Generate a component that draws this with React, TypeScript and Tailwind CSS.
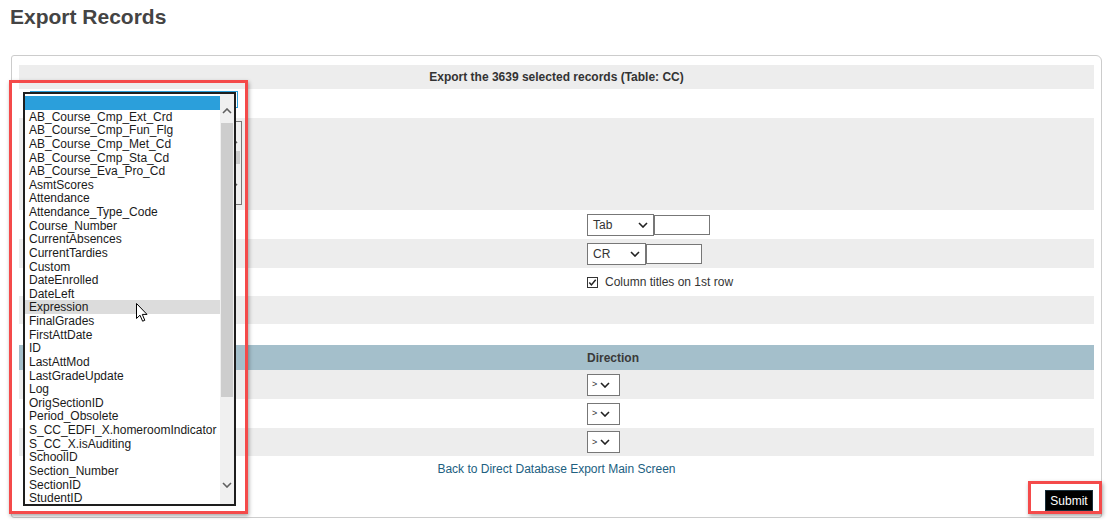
import type { ReactNode } from "react";

const fields = [
  "",
  "AB_Course_Cmp_Ext_Crd",
  "AB_Course_Cmp_Fun_Flg",
  "AB_Course_Cmp_Met_Cd",
  "AB_Course_Cmp_Sta_Cd",
  "AB_Course_Eva_Pro_Cd",
  "AsmtScores",
  "Attendance",
  "Attendance_Type_Code",
  "Course_Number",
  "CurrentAbsences",
  "CurrentTardies",
  "Custom",
  "DateEnrolled",
  "DateLeft",
  "Expression",
  "FinalGrades",
  "FirstAttDate",
  "ID",
  "LastAttMod",
  "LastGradeUpdate",
  "Log",
  "OrigSectionID",
  "Period_Obsolete",
  "S_CC_EDFI_X.homeroomIndicator",
  "S_CC_X.isAuditing",
  "SchoolID",
  "Section_Number",
  "SectionID",
  "StudentID",
];

function Chevron({ up = false, color = "#222" }: { up?: boolean; color?: string }) {
  return (
    <svg width="10" height="6" viewBox="0 0 10 6" className="block">
      <polyline points={up ? "1,5 5,1 9,5" : "1,1 5,5 9,1"} fill="none" stroke={color} strokeWidth="1.6" />
    </svg>
  );
}

function Row({ className, left, children }: { className: string; left?: ReactNode; children?: ReactNode }) {
  return (
    <div className={`grid grid-cols-[568px_1fr] items-center ${className}`}>
      <div className="relative h-full">{left}</div>
      <div className="flex items-center">{children}</div>
    </div>
  );
}

function DirSelect() {
  return (
    <div className="flex h-[22px] w-[33px] items-center border border-[#777] bg-white pl-[4px]">
      <span className="text-[9px] leading-none text-[#333]">&gt;</span>
      <span className="ml-[3px]">
        <Chevron />
      </span>
    </div>
  );
}

export default function App() {
  return (
    <div className="relative h-[520px] w-[1108px] overflow-hidden bg-white font-['Liberation_Sans',Arial,sans-serif] text-[12px] text-[#333]">
      <h1 className="pl-[10px] pt-[5px] text-[21px] font-bold leading-[24px] text-[#444]">Export Records</h1>

      <div className="ml-[11px] mt-[26px] w-[1091px] rounded-[3px] rounded-tr-[6px] border border-[#ccc] px-[7px] pb-[6px] pt-[9px]">
        <div className="flex h-[24px] items-center justify-center bg-[#ededed] font-bold text-[#333]">
          Export the 3639 selected records (Table: CC)
        </div>

        <Row
          className="h-[29px] bg-white"
          left={<div className="absolute left-[11px] top-[2px] h-[17px] w-[208px] border border-[#2b9fdb] bg-white" />}
        />

        <Row
          className="h-[92px] bg-[#ededed]"
          left={
            <div className="absolute left-[11px] top-[3px] flex h-[84px] w-[212px] border border-[#777] bg-white">
              <div className="flex-1" />
              <div className="relative w-[14px] bg-[#f0f0f0]">
                <div className="absolute left-[1px] top-[16px]">
                  <Chevron up color="#606060" />
                </div>
                <div className="absolute left-[1px] top-[29px] h-[13px] w-[12px] bg-[#cdcdcd]" />
                <div className="absolute left-[1px] top-[61px]">
                  <Chevron color="#606060" />
                </div>
              </div>
            </div>
          }
        />

        <Row className="h-[29px] bg-white">
          <div className="flex h-[22px] w-[67px] items-center justify-between border border-[#777] bg-white pl-[5px] pr-[5px]">
            <span>Tab</span>
            <Chevron />
          </div>
          <div className="h-[20px] w-[56px] border border-[#777] bg-white" />
        </Row>

        <Row className="h-[29px] bg-[#ededed]">
          <div className="flex h-[22px] w-[59px] items-center justify-between border border-[#777] bg-white pl-[5px] pr-[5px]">
            <span>CR</span>
            <Chevron />
          </div>
          <div className="h-[20px] w-[56px] border border-[#777] bg-white" />
        </Row>

        <Row className="h-[28px] bg-white">
          <svg width="11" height="11" viewBox="0 0 11 11" className="block">
            <rect x="0.5" y="0.5" width="10" height="10" fill="#fff" stroke="#333" />
            <polyline points="2.3,5.6 4.4,7.9 8.7,2.8" fill="none" stroke="#222" strokeWidth="1.5" />
          </svg>
          <span className="ml-[7px]">Column titles on 1st row</span>
        </Row>

        <Row className="h-[28px] bg-[#ededed]" />
        <Row className="h-[21px] bg-white" />

        <Row className="h-[25px] bg-[#a4bfcb]">
          <span className="font-bold text-[#3a3a3a]">Direction</span>
        </Row>

        <Row className="h-[29px] bg-[#ededed]">
          <DirSelect />
        </Row>
        <Row className="h-[29px] bg-white">
          <DirSelect />
        </Row>
        <Row className="h-[28px] bg-[#ededed]">
          <DirSelect />
        </Row>

        <div className="flex h-[25px] items-center justify-center">
          <a className="cursor-pointer text-[#20607f]">Back to Direct Database Export Main Screen</a>
        </div>

        <div className="mt-[9px] flex justify-end">
          <button className="mr-[1px] h-[21px] w-[48px] border border-[#1b2f3a] bg-black text-[12px] text-white">Submit</button>
        </div>
      </div>

      {/* open dropdown list */}
      <div className="absolute left-[23px] top-[92px] flex h-[414px] w-[213px] overflow-hidden border-2 border-[#1e1e1e] bg-white text-[12px] text-[#1a1a1a]">
        <div className="w-[195px] pt-[2px]">
          {fields.map((f, i) => (
            <div
              key={i}
              className={`h-[13.64px] whitespace-nowrap pl-[4px] leading-[13.64px] ${
                i === 0 ? "bg-[#2b9fdb]" : i === 15 ? "bg-[#dcdcdc]" : ""
              }`}
            >
              <span className="relative top-[1px]">{f}</span>
            </div>
          ))}
        </div>
        <div className="relative w-[14px] bg-[#f0f0f0]">
          <div className="absolute left-[2px] top-[14px]">
            <Chevron up color="#606060" />
          </div>
          <div className="absolute left-[1px] top-[29px] h-[274px] w-[12px] bg-[#cdcdcd]" />
          <div className="absolute left-[2px] top-[388px]">
            <Chevron color="#606060" />
          </div>
        </div>
      </div>

      {/* mouse pointer */}
      <svg width="12" height="19" viewBox="0 0 12 19" className="absolute left-[136px] top-[303px]">
        <path d="M0.5 0.5 L0.5 15.5 L4 12.2 L6.6 18.2 L8.8 17.3 L6.3 11.4 L11 11.4 Z" fill="#fff" stroke="#000" strokeWidth="1" strokeLinejoin="round" />
      </svg>

      {/* annotation boxes */}
      <div className="pointer-events-none absolute left-[9px] top-[80px] h-[434px] w-[239px] border-[3px] border-[#f44a4a] shadow-[1px_2px_4px_rgba(0,0,0,0.35)]" />
      <div className="pointer-events-none absolute left-[1028px] top-[481px] h-[33px] w-[74px] border-[3px] border-[#f44a4a] shadow-[1px_2px_4px_rgba(0,0,0,0.35)]" />
    </div>
  );
}
